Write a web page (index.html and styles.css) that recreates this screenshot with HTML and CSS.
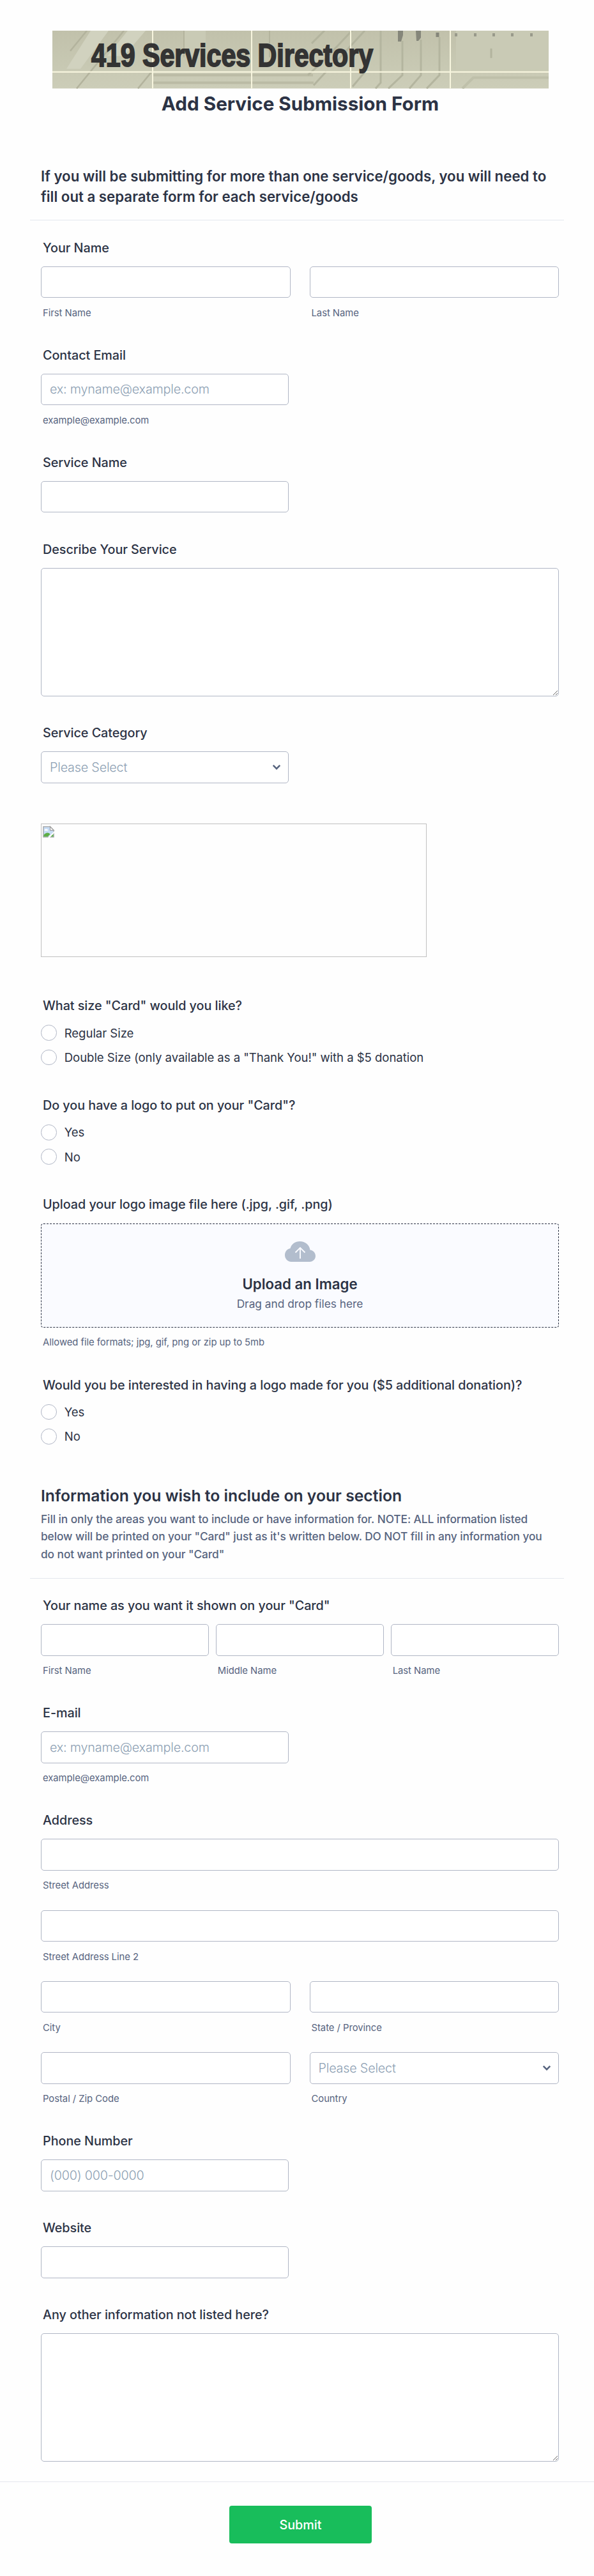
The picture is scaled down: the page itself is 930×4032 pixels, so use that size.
FILE: index.html
```html
<!DOCTYPE html>
<html lang="en">

<head>
    <meta charset="UTF-8">
    <meta name="viewport" content="width=device-width, initial-scale=1.0">
    <title>Add Service Submission Form</title>
    <link rel="stylesheet" href="styles.css">
</head>

<body>
    <form class="form">
        <header class="form-header">
            <svg class="banner" viewBox="0 0 777 91" preserveAspectRatio="none">
                <defs>
                    <linearGradient id="banner-bg" x1="0" y1="0" x2="0" y2="1">
                        <stop offset="0" stop-color="#c1c1ab" />
                        <stop offset="1" stop-color="#cccdb8" />
                    </linearGradient>
                </defs>
                <rect width="777" height="91" fill="url(#banner-bg)" />
                <path d="M60 0H88L44 60H22zM118 0H146L112 40H86z" fill="#d1d2bf" />
                <path d="M206 0H240V42H206z" fill="#c9cab5" />
                <path d="M54 0L28 32M112 0L38 91M156 64L134 91" stroke="#b3b39d" stroke-width="2.5" fill="none" />
                <path d="M206 0v42M340 0v42" stroke="#aeae98" stroke-width="1.5" />
                <path d="M158 70H408M158 82H409" stroke="#bbbba5" stroke-width="4" />
                <path d="M426 0L406 20M469 0L422 50L400 70M489 0L445 48M429 64L409 86M490 64L470 88" stroke="#b3b49e" stroke-width="3" fill="none" />
                <path d="M632 0H777V62H632z" fill="#c9cab5" />
                <path d="M514 0V82L506 91M548 16V70L526 91M577 14V70L559 91M606 10V70L586 91" stroke="#b4b59f" stroke-width="3" fill="none" />
                <path d="M642 91L659 74H777" stroke="#bfc0aa" stroke-width="4" fill="none" />
                <path d="M687 28v15" stroke="#b3b49e" stroke-width="3" />
                <path d="M541 0H549V7L546 17H541zM569 0H577V11L573 16H570z" fill="#85867a" />
                <path d="M603 3v7" stroke="#85867a" stroke-width="5" />
                <path d="M632 4v5M662 4v5M691 4v5M720 4v5M750 4v5" stroke="#999a8b" stroke-width="4" />
                <path d="M157 0V91M312 0V91M467 0V91M623 0V91" stroke="#f7f5de" stroke-width="2" />
                <path d="M0 65H777" stroke="#f7f5de" stroke-width="2.4" />
                <text class="banner-text" x="61" y="56" textLength="441" lengthAdjust="spacingAndGlyphs">419 Services Directory</text>
            </svg>
            <h1>Add Service Submission Form</h1>
        </header>

        <div class="section-head">
            <h3>If you will be submitting for more than one service/goods, you will need to fill out a separate form for each service/goods</h3>
        </div>

        <div class="field">
            <label class="label" for="first-name">Your Name</label>
            <div class="row two">
                <div>
                    <input type="text" id="first-name">
                    <span class="sub">First Name</span>
                </div>
                <div>
                    <input type="text" id="last-name">
                    <span class="sub">Last Name</span>
                </div>
            </div>
        </div>

        <div class="field">
            <label class="label" for="contact-email">Contact Email</label>
            <input type="email" class="half" id="contact-email" placeholder="ex: myname@example.com">
            <span class="sub">example@example.com</span>
        </div>

        <div class="field">
            <label class="label" for="service-name">Service Name</label>
            <input type="text" class="half" id="service-name">
        </div>

        <div class="field">
            <label class="label" for="describe">Describe Your Service</label>
            <textarea id="describe"></textarea>
        </div>

        <div class="field">
            <label class="label" for="category">Service Category</label>
            <div class="select half">
                <select id="category">
                    <option>Please Select</option>
                </select>
                <svg class="chevron" viewBox="0 0 12 8"><path d="M1.5 1.5L6 6l4.5-4.5" /></svg>
            </div>
        </div>

        <div class="card-image">
            <svg class="broken" viewBox="0 0 16 16">
                <path d="M1.5 1.5H10L14.5 6V14.5H1.5z" fill="#c6dcf5" stroke="#a0a0a0" />
                <path d="M2 14V12C4 9 8 8 10 11L7 14z" fill="#5dad46" />
                <path d="M10 14L14 10.500V14z" fill="#5dad46" />
                <path d="M3 6.500a1.500 1.500 0 0 1 2-2a1.500 1.500 0 0 1 2 2z" fill="#fff" />
                <path d="M10 1.500V6H14.500z" fill="#fff" stroke="#a0a0a0" />
                <path d="M15.500 8L8 15.500" stroke="#fff" stroke-width="1.600" />
            </svg>
        </div>

        <div class="field">
            <span class="label">What size "Card" would you like?</span>
            <div class="options">
                <label><input type="radio" name="size">Regular Size</label>
                <label><input type="radio" name="size">Double Size (only available as a "Thank You!" with a $5 donation</label>
            </div>
        </div>

        <div class="field">
            <span class="label">Do you have a logo to put on your "Card"?</span>
            <div class="options">
                <label><input type="radio" name="logo">Yes</label>
                <label><input type="radio" name="logo">No</label>
            </div>
        </div>

        <div class="field">
            <span class="label">Upload your logo image file here (.jpg, .gif, .png)</span>
            <div class="upload">
                <svg class="cloud" viewBox="0 0 48 32">
                    <path d="M10 32C4 31.500 0 27 0 21.500C0 16 3.500 12 8.500 11C10 4.500 16 0 23.500 0C32 0 38.500 5.500 39.500 13.500C44.500 14 48 18 48 23C48 28 44 31.700 39 32z" fill="#b2bdcd" />
                    <path d="M24 27V11M16.500 17.500L24 10l7.500 7.500" fill="none" stroke="#fafbff" stroke-width="1.900" />
                </svg>
                <strong>Upload an Image</strong>
                <span>Drag and drop files here</span>
            </div>
            <span class="sub">Allowed file formats; jpg, gif, png or zip up to 5mb</span>
        </div>

        <div class="field">
            <span class="label">Would you be interested in having a logo made for you ($5 additional donation)?</span>
            <div class="options">
                <label><input type="radio" name="logo-made">Yes</label>
                <label><input type="radio" name="logo-made">No</label>
            </div>
        </div>

        <div class="section-head info">
            <h2>Information you wish to include on your section</h2>
            <p>Fill in only the areas you want to include or have information for. NOTE: ALL information listed below will be printed on your "Card" just as it's written below. DO NOT fill in any information you do not want printed on your "Card"</p>
        </div>

        <div class="field">
            <label class="label" for="card-first">Your name as you want it shown on your "Card"</label>
            <div class="row three">
                <div>
                    <input type="text" id="card-first">
                    <span class="sub">First Name</span>
                </div>
                <div>
                    <input type="text" id="card-middle">
                    <span class="sub">Middle Name</span>
                </div>
                <div>
                    <input type="text" id="card-last">
                    <span class="sub">Last Name</span>
                </div>
            </div>
        </div>

        <div class="field">
            <label class="label" for="email">E-mail</label>
            <input type="email" class="half" id="email" placeholder="ex: myname@example.com">
            <span class="sub">example@example.com</span>
        </div>

        <div class="field">
            <label class="label" for="street">Address</label>
            <div class="address">
                <div>
                    <input type="text" id="street">
                    <span class="sub">Street Address</span>
                </div>
                <div>
                    <input type="text" id="street2">
                    <span class="sub">Street Address Line 2</span>
                </div>
                <div class="row two">
                    <div>
                        <input type="text" id="city">
                        <span class="sub">City</span>
                    </div>
                    <div>
                        <input type="text" id="state">
                        <span class="sub">State / Province</span>
                    </div>
                </div>
                <div class="row two">
                    <div>
                        <input type="text" id="zip">
                        <span class="sub">Postal / Zip Code</span>
                    </div>
                    <div>
                        <div class="select">
                            <select id="country">
                                <option>Please Select</option>
                            </select>
                            <svg class="chevron" viewBox="0 0 12 8"><path d="M1.5 1.5L6 6l4.5-4.5" /></svg>
                        </div>
                        <span class="sub">Country</span>
                    </div>
                </div>
            </div>
        </div>

        <div class="field">
            <label class="label" for="phone">Phone Number</label>
            <input type="tel" class="half" id="phone" placeholder="(000) 000-0000">
        </div>

        <div class="field">
            <label class="label" for="website">Website</label>
            <input type="text" class="half" id="website">
        </div>

        <div class="field">
            <label class="label" for="other">Any other information not listed here?</label>
            <textarea id="other"></textarea>
        </div>

        <div class="submit-row">
            <button type="button">Submit</button>
        </div>
    </form>
</body>

</html>
```
FILE: styles.css
```css
html {
    font-size: 19.787px;
}

* {
    box-sizing: border-box;
}

body {
    margin: 0;
    background: #fefefe;
    color: #2c3345;
    font-family: Inter, "Liberation Sans", sans-serif;
    font-size: 1rem;
}

.form {
    height: 4032px;
    overflow: hidden;
}

.form-header {
    height: 260px;
    padding: 48px 0 0 10px;
    text-align: center;
}

.banner {
    display: block;
    width: 777px;
    height: 90.5px;
    margin: 0 auto;
}

.banner-text {
    font-family: "Liberation Sans", Arial, sans-serif;
    font-weight: bold;
    font-size: 51px;
    fill: #333;
    stroke: #333;
    stroke-width: 2px;
}

h1,
h2,
h3,
p {
    margin: 0;
}

h1 {
    margin-top: 5px;
    font-size: 1.5rem;
    line-height: 36px;
    font-weight: 700;
}

.section-head {
    margin: 0 47px 30px;
    padding: 0 17px;
    height: 84.5px;
    border-bottom: 1px solid #e4e7ee;
}

.section-head h3 {
    font-size: 1.125rem;
    line-height: 32px;
    font-weight: 600;
}

.section-head.info {
    height: 145px;
    margin-top: 65px;
    margin-bottom: 29.5px;
}

.info h2 {
    font-size: 1.25rem;
    line-height: 30px;
    font-weight: 600;
}

.info p {
    margin-top: 8px;
    color: #57647e;
    font-size: 0.875rem;
    line-height: 27.6px;
    font-weight: 500;
    letter-spacing: -0.07px;
}

.field {
    margin: 0 55px 2.25rem 64px;
}

.label {
    display: block;
    margin: 0 0 16.3px;
    padding: 1px 0 0 3px;
    line-height: 1.25rem;
    font-weight: 500;
    letter-spacing: -0.04px;
}

input[type="text"],
input[type="email"],
input[type="tel"],
textarea,
select {
    display: block;
    width: 100%;
    height: 2.5rem;
    padding: 0 13px;
    border: 1px solid #b0b6c5;
    border-radius: 5px;
    background: #fff;
    color: #2c3345;
    font-family: inherit;
    font-size: 1rem;
    outline: none;
}

.field textarea {
    height: 201px;
}

input.half,
.select.half {
    width: 388px;
}

::placeholder {
    color: #8d9fb3;
    font-weight: 300;
    letter-spacing: -0.01em;
    opacity: 1;
}

.sub {
    display: block;
    margin-top: 0.6875rem;
    padding: 1px 0 0 3px;
    margin-bottom: -1px;
    color: #57647e;
    font-size: 0.75rem;
    line-height: 0.9375rem;
    letter-spacing: -0.04px;
}

.row {
    display: grid;
}

.two {
    grid-template-columns: 1fr 1fr;
    column-gap: 30px;
}

.three {
    grid-template-columns: 1fr 1fr 1fr;
    column-gap: 10.5px;
}

.row > div,
.address > div {
    height: 81.6px;
}

.address {
    display: grid;
    row-gap: 1.5rem;
}

.select {
    position: relative;
}

.select select {
    appearance: none;
    color: #8d9fb3;
    font-weight: 300;
    letter-spacing: -0.01em;
}

.chevron {
    position: absolute;
    right: 12px;
    top: 20px;
    width: 14px;
    height: 9.5px;
    fill: none;
    stroke: #57647e;
    stroke-width: 2.2;
}

.card-image {
    width: 603.5px;
    height: 209px;
    margin: 63px 0 63.5px 64px;
    padding: 2px 1px;
    border: 1px solid #c0c0c0;
}

.broken {
    display: block;
    width: 20px;
    height: 20px;
}

.options {
    display: grid;
    row-gap: 13.6px;
    margin-bottom: 2.5rem;
    padding-top: 1px;
}

.options label {
    display: flex;
    align-items: center;
    gap: 12px;
    height: 1.25rem;
    font-size: 0.9375rem;
    letter-spacing: -0.04px;
}

.options input {
    appearance: none;
    width: 1.25rem;
    height: 1.25rem;
    margin: 0;
    border: 1px solid #b0b6c5;
    border-radius: 50%;
    background: #fff;
}

.upload {
    display: flex;
    flex-direction: column;
    align-items: center;
    height: 162.5px;
    margin-top: 17.3px;
    padding-top: 27px;
    border: 1px dashed #2c3345;
    border-radius: 4px;
    background: #fafbff;
}

.cloud {
    width: 48px;
    height: 32px;
}

.upload strong {
    margin-top: 20px;
    font-size: 1.125rem;
    line-height: 30px;
    font-weight: 600;
}

.upload span {
    margin-top: 4px;
    color: #57647e;
    font-size: 0.875rem;
    line-height: 24px;
}

.submit-row {
    display: flex;
    justify-content: center;
    margin-top: -14px;
    padding: 37px 0 0 11px;
    border-top: 1px solid #e4e7ee;
}

.submit-row button {
    width: 222.5px;
    height: 59.5px;
    border: 0;
    border-radius: 4px;
    background: #18bd5b;
    color: #fff;
    font-family: inherit;
    font-size: 1rem;
    font-weight: 500;
}
```
